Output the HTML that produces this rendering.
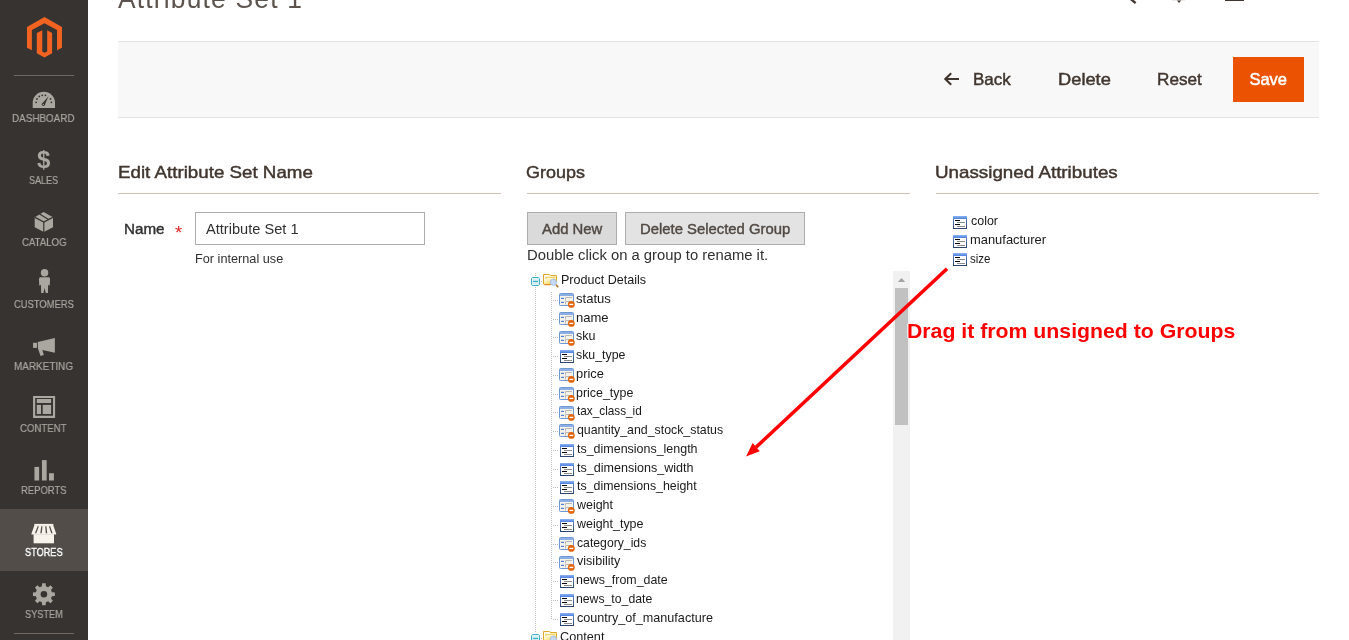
<!DOCTYPE html>
<html><head><meta charset="utf-8">
<style>
*{margin:0;padding:0;box-sizing:border-box}
html,body{width:1349px;height:640px;overflow:hidden;background:#fff;font-family:"Liberation Sans",sans-serif;color:#41362f}
.abs{position:absolute}
.t{position:absolute;white-space:nowrap;line-height:1;transform-origin:0 0}
svg{position:absolute;overflow:visible}
.dotsv{width:1px;background:repeating-linear-gradient(to bottom,#bcbcbc 0,#bcbcbc 1px,transparent 1px,transparent 2px)}
.dotsh{height:1px;background:repeating-linear-gradient(to right,#bcbcbc 0,#bcbcbc 1px,transparent 1px,transparent 2px)}
</style></head><body>
<svg width="0" height="0" style="left:0;top:0">
<defs>
 <linearGradient id="gbar" x1="0" y1="0" x2="0" y2="1"><stop offset="0" stop-color="#8fb4f0"/><stop offset="1" stop-color="#4a7fe0"/></linearGradient>
 <linearGradient id="gside" x1="0" y1="0" x2="0" y2="1"><stop offset="0" stop-color="#6a8fd0"/><stop offset="1" stop-color="#2a4570"/></linearGradient>
 <linearGradient id="gfold" x1="0" y1="0" x2="1" y2="1"><stop offset="0" stop-color="#fffbe6"/><stop offset="1" stop-color="#ffd640"/></linearGradient>
 <symbol id="reg" viewBox="0 0 14 13">
  <rect x="0.5" y="0.5" width="13" height="12" fill="#fff" stroke="url(#gside)"/>
  <rect x="0" y="0" width="14" height="3" fill="url(#gbar)"/>
  <rect x="2" y="4" width="5" height="1" fill="#000"/>
  <rect x="4" y="6" width="8" height="1" fill="#8a8a8a"/>
  <rect x="2" y="8" width="5" height="1" fill="#000"/>
  <rect x="4" y="10" width="8" height="1" fill="#8a8a8a"/>
 </symbol>
 <symbol id="sys" viewBox="0 0 17 16">
  <rect x="0.5" y="0.5" width="14" height="12" rx="1" fill="#f5f2ea" stroke="#6e97d4"/>
  <rect x="1" y="1" width="13" height="2" fill="#8cb0e6"/>
  <rect x="2" y="4.8" width="3" height="1.2" fill="#4f7fd8"/>
  <rect x="2" y="8.8" width="3" height="1.2" fill="#4f7fd8"/>
  <path d="M6.5 7.5V4.5H13M6.5 11.5V8.5H13" fill="none" stroke="#b8b8b8" stroke-width="1"/>
  <circle cx="12.3" cy="11.4" r="3.4" fill="#e2650e"/>
  <rect x="10.4" y="10.8" width="3.8" height="1.3" fill="#fff"/>
 </symbol>
 <symbol id="folder" viewBox="0 0 16 15">
  <linearGradient id="gf2" x1="0" y1="0" x2="0.6" y2="1"><stop offset="0.35" stop-color="#fffdf4"/><stop offset="1" stop-color="#fbd94e"/></linearGradient>
  <path d="M0.5,10.5 V0.5 H6.6 L7.3,1.5 H13.5 V10.5 Z" fill="url(#gf2)"/>
  <path d="M0.5,10.2 V0.5 H6.6 L7.3,1.5 H13.5 V8" fill="none" stroke="#dcaa2c"/>
  <path d="M1.2,10.6 H8" stroke="#e58a1e" stroke-width="1.2"/>
  <rect x="2" y="2.8" width="10" height="1.1" fill="#f1cf62"/>
  <rect x="2" y="3.6" width="2.5" height="1.2" fill="#f4dc8c"/>
  <circle cx="10.4" cy="8.25" r="3.1" fill="#c6daf6" stroke="#9fbdec" stroke-width="0.9"/>
  <path d="M13,10.9 L15.3,13.3" stroke="#b8732e" stroke-width="1.6"/>
 </symbol>
 <symbol id="minus" viewBox="0 0 9 9">
  <path d="M1.5 0.5H7.5L8.5 1.5V7.5L7.5 8.5H1.5L0.5 7.5V1.5Z" fill="#dcf0f4" stroke="#3fb2ca"/>
  <rect x="2" y="3.8" width="5" height="1.3" fill="#3fb2ca"/>
 </symbol>
</defs></svg>
<!-- sidebar -->
<div class="abs" style="left:0;top:0;width:88px;height:640px;background:#373330"></div>
<svg style="left:10px;top:10px" width="70" height="70" viewBox="0 0 640 640">
 <polygon fill="#f26322" points="315,65 475,155 475,345 430,368 430,183 315,120 200,183 200,368 155,345 155,155"/>
 <polygon fill="#f26322" points="245,210 295,185 295,380 315,390 340,380 340,185 385,210 385,395 315,435 245,395"/>
</svg>
<div class="abs" style="left:14px;top:75px;width:60px;height:1px;background:#736963"></div>
<div class="abs" style="left:14px;top:633px;width:60px;height:1px;background:#736963"></div>
<div class="abs" style="left:0;top:509px;width:88px;height:62px;background:#524d49"></div>
<!-- sideicons -->
<svg style="left:0;top:0;will-change:transform" width="88" height="640" viewBox="0 0 88 640">
 <g fill="#aaa6a0">
  <!-- dashboard -->
  <path d="M32.7,108 V102.8 A11.15,11.15 0 0 1 55,102.8 V108 Z"/>
  <g fill="#373330">
   <circle cx="36.1" cy="102.3" r="0.9"/><circle cx="37" cy="99" r="0.9"/><circle cx="39.25" cy="96.4" r="0.9"/>
   <circle cx="42.25" cy="95.3" r="0.9"/><circle cx="45.4" cy="95.3" r="0.9"/><circle cx="50.5" cy="98.9" r="0.9"/><circle cx="51.4" cy="102.3" r="0.9"/>
   <path d="M42.2,103.6 L48.5,96.2 L44.6,105.2 Z"/>
   <circle cx="43.4" cy="104.3" r="1.6"/>
  </g><g fill="#aaa6a0"><circle cx="43.3" cy="104.4" r="0.6"/>
  </g>
  <!-- catalog -->
  <polygon points="43.6,211.9 53,217.3 53,227.3 43.8,232 34.7,227.3 34.7,217.3"/>
  <g stroke="#373330" stroke-width="1.2" fill="none">
   <path d="M35,217.4 L43.8,222 L52.7,217.4"/>
   <path d="M43.8,222 V232"/>
   <path d="M39.6,214 L48.6,219.4"/>
  </g>
  <!-- customers -->
  <circle cx="44.56" cy="272.7" r="3.75"/>
  <polygon points="39.74,277.25 49.35,277.25 50.05,278.89 49.72,285.69 48.17,284.75 47.94,293.10 45.69,293.10 44.56,288.03 43.44,293.10 41.19,293.10 40.91,284.75 39.27,285.69 38.94,278.89"/>
  <!-- marketing -->
  <rect x="33.05" y="342.8" width="3.9" height="5.1"/>
  <polygon points="37.74,342.08 54.85,338.09 54.85,352.86 42.42,350.05 43.83,354.97 40.55,355.91 37.97,348.41"/>
  <!-- content -->
  <path fill-rule="evenodd" d="M33.05,396 H55.1 V418 H33.05 Z M35.2,398.1 V415.8 H53 V398.1 Z"/>
  <rect x="36.8" y="399" width="14.3" height="4"/>
  <rect x="36.8" y="404.9" width="4.2" height="9.1"/>
  <rect x="42.7" y="404.9" width="8.4" height="9.1"/>
  <!-- reports -->
  <rect x="34.45" y="466.9" width="4.7" height="13.6"/>
  <rect x="41.96" y="460.1" width="4.7" height="20.4"/>
  <rect x="49" y="473.2" width="4.9" height="7.3"/>
  <!-- system -->
  <path fill-rule="evenodd" d="M40.76,586.67 L41.92,586.29 L42.16,583.29 L45.64,583.29 L45.88,586.29 L47.04,586.67 L48.12,587.22 L50.42,585.27 L52.88,587.73 L50.93,590.03 L51.48,591.11 L51.86,592.27 L54.86,592.51 L54.86,595.99 L51.86,596.23 L51.48,597.39 L50.93,598.47 L52.88,600.77 L50.42,603.23 L48.12,601.28 L47.04,601.83 L45.88,602.21 L45.64,605.21 L42.16,605.21 L41.92,602.21 L40.76,601.83 L39.68,601.28 L37.38,603.23 L34.92,600.77 L36.87,598.47 L36.32,597.39 L35.94,596.23 L32.94,595.99 L32.94,592.51 L35.94,592.27 L36.32,591.11 L36.87,590.03 L34.92,587.73 L37.38,585.27 L39.68,587.22Z M47.20,594.25 A3.3,3.3 0 1,0 40.60,594.25 A3.3,3.3 0 1,0 47.20,594.25Z"/>
 </g>
 <!-- stores -->
 <g fill="#f7f3eb">
  <rect x="34.3" y="523.9" width="19" height="2"/>
  <polygon points="34.3,525.6 53.3,525.6 56.1,533.4 56.1,534.4 31.5,534.4 31.5,533.4"/>
  <rect x="33.6" y="534.2" width="20.4" height="9.1"/>
  <g fill="#524d49">
   <path d="M37.6,526.3 L38.9,526.3 L36.3,533.3 L34.9,533.3 Z"/>
   <path d="M41.3,526.3 L42.5,526.3 L41.7,533.3 L40.3,533.3 Z"/>
   <path d="M45.2,526.3 L46.4,526.3 L47.2,533.3 L45.8,533.3 Z"/>
   <path d="M48.9,526.3 L50.2,526.3 L52.6,533.3 L51.2,533.3 Z"/>
  </g>
 </g>
 <!-- sales -->
 <text x="43.8" y="168.3" text-anchor="middle" font-family="Liberation Sans" font-weight="bold" font-size="24" fill="#aaa6a0">$</text>
</svg>
<!-- /sideicons -->
<!-- action bar -->
<div class="abs" style="left:118px;top:41px;width:1201px;height:77px;background:#f8f8f8;border-top:1px solid #e3e3e3;border-bottom:1px solid #e3e3e3"></div>
<div class="abs" style="left:1233px;top:57px;width:71px;height:45px;background:#eb5202"></div>
<!-- headings underline -->
<div class="abs" style="left:118px;top:193px;width:383px;height:1px;background:#cac3b4"></div>
<div class="abs" style="left:527px;top:193px;width:383px;height:1px;background:#cac3b4"></div>
<div class="abs" style="left:936px;top:193px;width:383px;height:1px;background:#cac3b4"></div>
<!-- form -->
<div class="abs" style="left:195px;top:212px;width:230px;height:33px;border:1px solid #adadad;background:#fff"></div>
<div class="abs" style="left:527px;top:212px;width:90px;height:33px;background:#dadada;border:1px solid #adadad"></div>
<div class="abs" style="left:625px;top:212px;width:180px;height:33px;background:#e3e3e3;border:1px solid #adadad"></div>
<!-- scrollbar -->
<div class="abs" style="left:893px;top:271px;width:17px;height:369px;background:#f1f1f1"></div>
<div class="abs" style="left:895px;top:288px;width:13px;height:137px;background:#c1c1c1"></div>
<svg style="left:893px;top:271px" width="17" height="17"><polygon points="4.8,11 12.2,11 8.5,7" fill="#a3a3a3"/></svg>
<!-- back arrow -->
<svg style="left:0;top:0" width="1349" height="640">
 <path d="M951.2,73.2 L945.3,79 L951.2,84.8 M945.5,79 H959" fill="none" stroke="#41362f" stroke-width="2.1"/>
 <!-- header icons cut off -->
 <path d="M1128.5,-3 L1135.6,3.2" stroke="#41362f" stroke-width="2.4"/>
 <rect x="1172" y="0" width="13" height="0.8" fill="#e8e8e8"/>
 <path d="M1177,0.4 H1181.2 L1179.1,2.9 Z" fill="#41362f"/>
 <rect x="1225" y="0" width="19" height="1" fill="#41362f"/>
</svg>
<svg style="left:531px;top:277px" width="9" height="9"><use href="#minus"/></svg>
<svg style="left:543px;top:274px" width="16" height="15"><use href="#folder"/></svg>
<div class="abs dotsh" style="left:541px;top:281px;width:2px"></div>
<div class="abs dotsh" style="left:553px;top:300px;width:6px"></div>
<svg style="left:559px;top:293px" width="17" height="16"><use href="#sys"/></svg>
<div class="abs dotsh" style="left:553px;top:319px;width:6px"></div>
<svg style="left:559px;top:312px" width="17" height="16"><use href="#sys"/></svg>
<div class="abs dotsh" style="left:553px;top:337px;width:6px"></div>
<svg style="left:559px;top:331px" width="17" height="16"><use href="#sys"/></svg>
<div class="abs dotsh" style="left:553px;top:356px;width:6px"></div>
<svg style="left:560px;top:350px" width="14" height="13"><use href="#reg"/></svg>
<div class="abs dotsh" style="left:553px;top:375px;width:6px"></div>
<svg style="left:559px;top:368px" width="17" height="16"><use href="#sys"/></svg>
<div class="abs dotsh" style="left:553px;top:394px;width:6px"></div>
<svg style="left:559px;top:387px" width="17" height="16"><use href="#sys"/></svg>
<div class="abs dotsh" style="left:553px;top:412px;width:6px"></div>
<svg style="left:559px;top:406px" width="17" height="16"><use href="#sys"/></svg>
<div class="abs dotsh" style="left:553px;top:431px;width:6px"></div>
<svg style="left:559px;top:424px" width="17" height="16"><use href="#sys"/></svg>
<div class="abs dotsh" style="left:553px;top:450px;width:6px"></div>
<svg style="left:560px;top:444px" width="14" height="13"><use href="#reg"/></svg>
<div class="abs dotsh" style="left:553px;top:469px;width:6px"></div>
<svg style="left:560px;top:463px" width="14" height="13"><use href="#reg"/></svg>
<div class="abs dotsh" style="left:553px;top:487px;width:6px"></div>
<svg style="left:560px;top:481px" width="14" height="13"><use href="#reg"/></svg>
<div class="abs dotsh" style="left:553px;top:506px;width:6px"></div>
<svg style="left:559px;top:499px" width="17" height="16"><use href="#sys"/></svg>
<div class="abs dotsh" style="left:553px;top:525px;width:6px"></div>
<svg style="left:560px;top:519px" width="14" height="13"><use href="#reg"/></svg>
<div class="abs dotsh" style="left:553px;top:544px;width:6px"></div>
<svg style="left:559px;top:537px" width="17" height="16"><use href="#sys"/></svg>
<div class="abs dotsh" style="left:553px;top:562px;width:6px"></div>
<svg style="left:559px;top:556px" width="17" height="16"><use href="#sys"/></svg>
<div class="abs dotsh" style="left:553px;top:581px;width:6px"></div>
<svg style="left:560px;top:575px" width="14" height="13"><use href="#reg"/></svg>
<div class="abs dotsh" style="left:553px;top:600px;width:6px"></div>
<svg style="left:560px;top:594px" width="14" height="13"><use href="#reg"/></svg>
<div class="abs dotsh" style="left:553px;top:619px;width:6px"></div>
<svg style="left:560px;top:613px" width="14" height="13"><use href="#reg"/></svg>
<svg style="left:531px;top:634px" width="9" height="9"><use href="#minus"/></svg>
<svg style="left:543px;top:631px" width="16" height="15"><use href="#folder"/></svg>
<div class="abs dotsh" style="left:541px;top:638px;width:2px"></div>
<div class="abs dotsv" style="left:535px;top:273px;height:4px"></div>
<div class="abs dotsv" style="left:535px;top:287px;height:346px"></div>
<div class="abs dotsv" style="left:551px;top:292px;height:327px"></div>
<svg style="left:953px;top:216px" width="14" height="13"><use href="#reg"/></svg>
<svg style="left:953px;top:235px" width="14" height="13"><use href="#reg"/></svg>
<svg style="left:953px;top:253px" width="14" height="13"><use href="#reg"/></svg>
<div class="t" style="left:12.34px;top:113px;font-size:11.5px;color:#aaa6a0;font-weight:normal;-webkit-text-stroke:0.2px #aaa6a0;transform:scaleX(0.8583);letter-spacing:0px;will-change:transform;">DASHBOARD</div>
<div class="t" style="left:29.00px;top:175px;font-size:11.5px;color:#aaa6a0;font-weight:normal;-webkit-text-stroke:0.2px #aaa6a0;transform:scaleX(0.7838);letter-spacing:0px;will-change:transform;">SALES</div>
<div class="t" style="left:21.60px;top:237px;font-size:11.5px;color:#aaa6a0;font-weight:normal;-webkit-text-stroke:0.2px #aaa6a0;transform:scaleX(0.8377);letter-spacing:0px;will-change:transform;">CATALOG</div>
<div class="t" style="left:14.00px;top:299px;font-size:11.5px;color:#aaa6a0;font-weight:normal;-webkit-text-stroke:0.2px #aaa6a0;transform:scaleX(0.8178);letter-spacing:0px;will-change:transform;">CUSTOMERS</div>
<div class="t" style="left:14.14px;top:361px;font-size:11.5px;color:#aaa6a0;font-weight:normal;-webkit-text-stroke:0.2px #aaa6a0;transform:scaleX(0.8627);letter-spacing:0px;will-change:transform;">MARKETING</div>
<div class="t" style="left:20.30px;top:423px;font-size:11.5px;color:#aaa6a0;font-weight:normal;-webkit-text-stroke:0.2px #aaa6a0;transform:scaleX(0.8375);letter-spacing:0px;will-change:transform;">CONTENT</div>
<div class="t" style="left:21.08px;top:485px;font-size:11.5px;color:#aaa6a0;font-weight:normal;-webkit-text-stroke:0.2px #aaa6a0;transform:scaleX(0.8222);letter-spacing:0px;will-change:transform;">REPORTS</div>
<div class="t" style="left:25.00px;top:547px;font-size:11.5px;color:#ffffff;font-weight:normal;-webkit-text-stroke:0.4px #ffffff;transform:scaleX(0.7979);letter-spacing:0px;will-change:transform;">STORES</div>
<div class="t" style="left:25.00px;top:609px;font-size:11.5px;color:#aaa6a0;font-weight:normal;-webkit-text-stroke:0.2px #aaa6a0;transform:scaleX(0.7979);letter-spacing:0px;will-change:transform;">SYSTEM</div>
<div class="t" style="left:117.80px;top:-14px;font-size:27px;color:#41362f;font-weight:normal;transform:scaleX(0.9786);letter-spacing:1.2px;opacity:0.85;">Attribute Set 1</div>
<div class="t" style="left:972.57px;top:71px;font-size:16.5px;color:#41362f;font-weight:normal;-webkit-text-stroke:0.45px #41362f;transform:scaleX(1.0306);letter-spacing:0px;">Back</div>
<div class="t" style="left:1057.89px;top:71px;font-size:16.5px;color:#41362f;font-weight:normal;-webkit-text-stroke:0.45px #41362f;transform:scaleX(1.1087);letter-spacing:0px;">Delete</div>
<div class="t" style="left:1157.26px;top:71px;font-size:16.5px;color:#41362f;font-weight:normal;-webkit-text-stroke:0.45px #41362f;transform:scaleX(1.0405);letter-spacing:0px;">Reset</div>
<div class="t" style="left:1249.40px;top:71px;font-size:16.5px;color:#ffffff;font-weight:normal;-webkit-text-stroke:0.5px #ffffff;transform:scaleX(1.0000);letter-spacing:0px;">Save</div>
<div class="t" style="left:117.90px;top:164px;font-size:17px;color:#41362f;font-weight:normal;-webkit-text-stroke:0.45px #41362f;transform:scaleX(1.1029);letter-spacing:0px;">Edit Attribute Set Name</div>
<div class="t" style="left:526.04px;top:164px;font-size:17px;color:#41362f;font-weight:normal;-webkit-text-stroke:0.45px #41362f;transform:scaleX(1.0564);letter-spacing:0px;">Groups</div>
<div class="t" style="left:935.20px;top:164px;font-size:17px;color:#41362f;font-weight:normal;-webkit-text-stroke:0.45px #41362f;transform:scaleX(1.1049);letter-spacing:0px;">Unassigned Attributes</div>
<div class="t" style="left:123.91px;top:222px;font-size:14px;color:#303030;font-weight:normal;-webkit-text-stroke:0.4px #303030;transform:scaleX(1.0861);letter-spacing:0px;">Name</div>
<div class="t" style="left:206.30px;top:222px;font-size:14px;color:#303030;font-weight:normal;transform:scaleX(1.0432);letter-spacing:0px;">Attribute Set 1</div>
<div class="t" style="left:194.94px;top:253px;font-size:12px;color:#303030;font-weight:normal;transform:scaleX(1.0585);letter-spacing:0px;">For internal use</div>
<div class="t" style="left:541.80px;top:222px;font-size:14px;color:#514943;font-weight:normal;-webkit-text-stroke:0.4px #514943;transform:scaleX(1.0614);letter-spacing:0px;">Add New</div>
<div class="t" style="left:639.74px;top:222px;font-size:14px;color:#514943;font-weight:normal;-webkit-text-stroke:0.4px #514943;transform:scaleX(1.0607);letter-spacing:0px;">Delete Selected Group</div>
<div class="t" style="left:526.74px;top:248px;font-size:14px;color:#303030;font-weight:normal;transform:scaleX(1.0575);letter-spacing:0px;">Double click on a group to rename it.</div>
<div class="t" style="left:560.63px;top:273px;font-size:13px;color:#1a1a1a;font-weight:normal;transform:scaleX(0.9655);letter-spacing:0px;">Product Details</div>
<div class="t" style="left:576.19px;top:292px;font-size:13px;color:#1a1a1a;font-weight:normal;transform:scaleX(1.0061);letter-spacing:0px;">status</div>
<div class="t" style="left:576.20px;top:311px;font-size:13px;color:#1a1a1a;font-weight:normal;transform:scaleX(1.0032);letter-spacing:0px;">name</div>
<div class="t" style="left:576.24px;top:329px;font-size:13px;color:#1a1a1a;font-weight:normal;transform:scaleX(0.9632);letter-spacing:0px;">sku</div>
<div class="t" style="left:576.25px;top:348px;font-size:13px;color:#1a1a1a;font-weight:normal;transform:scaleX(0.9510);letter-spacing:0px;">sku_type</div>
<div class="t" style="left:576.41px;top:367px;font-size:13px;color:#1a1a1a;font-weight:normal;transform:scaleX(0.9889);letter-spacing:0px;">price</div>
<div class="t" style="left:576.44px;top:386px;font-size:13px;color:#1a1a1a;font-weight:normal;transform:scaleX(0.9559);letter-spacing:0px;">price_type</div>
<div class="t" style="left:577.40px;top:404px;font-size:13px;color:#1a1a1a;font-weight:normal;transform:scaleX(0.9056);letter-spacing:0px;">tax_class_id</div>
<div class="t" style="left:577.40px;top:423px;font-size:13px;color:#1a1a1a;font-weight:normal;transform:scaleX(0.9494);letter-spacing:0px;">quantity_and_stock_status</div>
<div class="t" style="left:577.40px;top:442px;font-size:13px;color:#1a1a1a;font-weight:normal;transform:scaleX(0.9584);letter-spacing:0px;">ts_dimensions_length</div>
<div class="t" style="left:577.40px;top:461px;font-size:13px;color:#1a1a1a;font-weight:normal;transform:scaleX(0.9650);letter-spacing:0px;">ts_dimensions_width</div>
<div class="t" style="left:577.40px;top:479px;font-size:13px;color:#1a1a1a;font-weight:normal;transform:scaleX(0.9516);letter-spacing:0px;">ts_dimensions_height</div>
<div class="t" style="left:577.40px;top:498px;font-size:13px;color:#1a1a1a;font-weight:normal;transform:scaleX(0.9579);letter-spacing:0px;">weight</div>
<div class="t" style="left:577.40px;top:517px;font-size:13px;color:#1a1a1a;font-weight:normal;transform:scaleX(0.9580);letter-spacing:0px;">weight_type</div>
<div class="t" style="left:577.40px;top:536px;font-size:13px;color:#1a1a1a;font-weight:normal;transform:scaleX(0.9397);letter-spacing:0px;">category_ids</div>
<div class="t" style="left:577.40px;top:554px;font-size:13px;color:#1a1a1a;font-weight:normal;transform:scaleX(0.9667);letter-spacing:0px;">visibility</div>
<div class="t" style="left:576.45px;top:573px;font-size:13px;color:#1a1a1a;font-weight:normal;transform:scaleX(0.9537);letter-spacing:0px;">news_from_date</div>
<div class="t" style="left:576.46px;top:592px;font-size:13px;color:#1a1a1a;font-weight:normal;transform:scaleX(0.9413);letter-spacing:0px;">news_to_date</div>
<div class="t" style="left:577.40px;top:611px;font-size:13px;color:#1a1a1a;font-weight:normal;transform:scaleX(0.9693);letter-spacing:0px;">country_of_manufacture</div>
<div class="t" style="left:560.22px;top:630px;font-size:13px;color:#1a1a1a;font-weight:normal;transform:scaleX(0.9756);letter-spacing:0px;">Content</div>
<div class="t" style="left:970.60px;top:214px;font-size:13px;color:#1a1a1a;font-weight:normal;transform:scaleX(0.9571);letter-spacing:0px;">color</div>
<div class="t" style="left:969.61px;top:233px;font-size:13px;color:#1a1a1a;font-weight:normal;transform:scaleX(0.9934);letter-spacing:0px;">manufacturer</div>
<div class="t" style="left:969.71px;top:252px;font-size:13px;color:#1a1a1a;font-weight:normal;transform:scaleX(0.8864);letter-spacing:0px;">size</div>
<div class="t" style="left:907.29px;top:320px;font-size:21px;color:#ff0000;font-weight:bold;transform:scaleX(1.0121);letter-spacing:0px;text-shadow:0 0 1px #fff,0 0 1px #fff,1px 0 0 #fff,-1px 0 0 #fff,0 1px 0 #fff,0 -1px 0 #fff;">Drag it from unsigned to Groups</div>
<div class="t" style="left:175px;top:224px;font-size:18.5px;color:#e22626;line-height:1">*</div>
<svg style="left:0;top:0" width="1349" height="640">
 <line x1="947" y1="268.75" x2="756" y2="447.3" stroke="#ff0000" stroke-width="3.6"/>
 <polygon points="746,456.6 752.7,443 759.7,451.25" fill="#ff0000"/>
</svg>
</body></html>
